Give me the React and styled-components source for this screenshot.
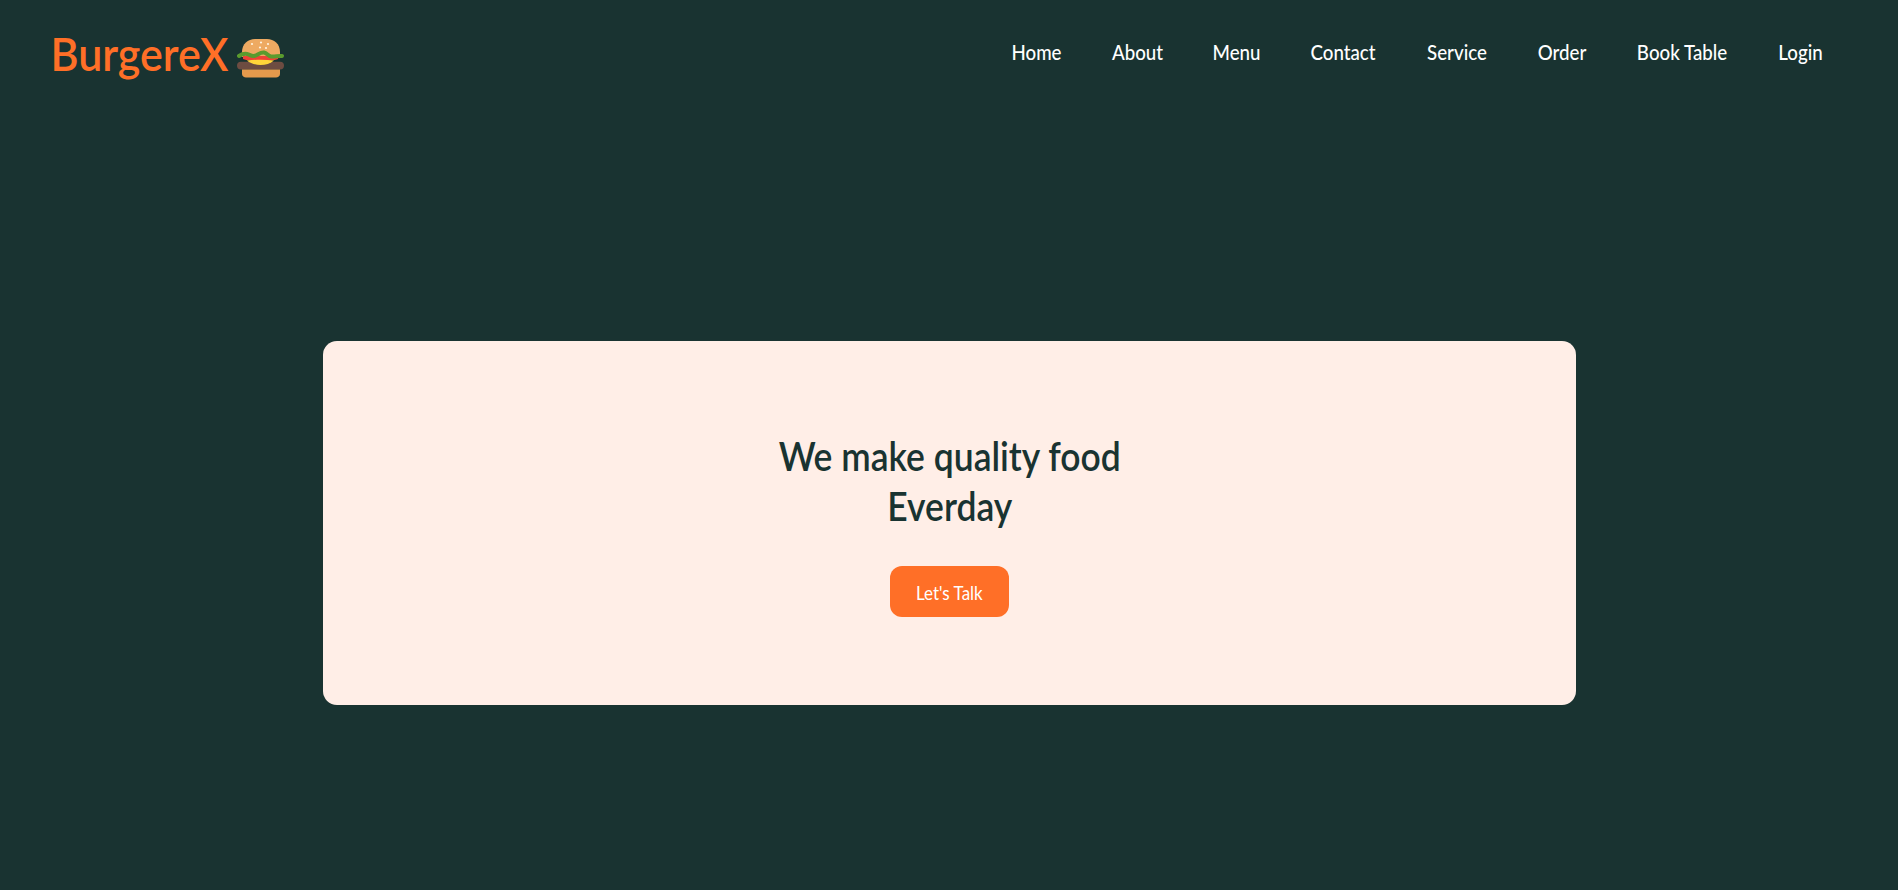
import React from 'react'
import styled, { createGlobalStyle } from 'styled-components'

// widths keep every link on the same spot as the design
const NAV_LINKS = [
    { label: 'Home', width: 51 },
    { label: 'About', width: 51 },
    { label: 'Menu', width: 47 },
    { label: 'Contact', width: 66 },
    { label: 'Service', width: 62 },
    { label: 'Order', width: 48 },
    { label: 'Book Table', width: 92 },
    { label: 'Login', width: 45 },
]

const GlobalStyle = createGlobalStyle`
    * {
        box-sizing: border-box;
    }
    body {
        margin: 0;
        background-color: #193331;
        font-family: "Lato", "Noto Sans", sans-serif;
    }
`

function BurgerIcon() {
    return (
        <Burger viewBox="0 0 47 39" aria-hidden="true">
            <path d="M5 13C5 5 11 0 18 0H30C37 0 43 5 43 13V18H5Z" fill="#eeaa62" />
            <g fill="#fff3df">
                <circle cx="15" cy="5" r="1.1" />
                <circle cx="24" cy="3.5" r="1.1" />
                <circle cx="31" cy="5" r="1.1" />
                <circle cx="23" cy="8.5" r="1.1" />
                <circle cx="29" cy="9" r="1.1" />
            </g>
            <path d="M6 17H41V20C34 23 13 23 6 20Z" fill="#ef4336" />
            <path d="M2 17C5 15 7 14.5 10 15C13 15.5 14 17.5 17 17C21 16 23 13 27 13.5C30 14 31 17 34 17.5C38 18 41 16.5 45 17" fill="none" stroke="#5a9b2e" strokeWidth="4" strokeLinecap="round" />
            <rect x="0" y="22.7" width="47" height="7.8" rx="3.9" fill="#6d4c41" />
            <path d="M10 21.5C20 20.5 28 20.5 37 21.5C30 27.5 17 27.5 10 21.5Z" fill="#ffd639" />
            <path d="M5 30.5H43V35C43 37 41 38.5 39 38.5H9C7 38.5 5 37 5 35Z" fill="#e59a4c" />
        </Burger>
    )
}

function App() {
    return (
        <Page>
            <GlobalStyle />
            <Header>
                <Logo>
                    <LogoText>BurgereX</LogoText>
                    <BurgerIcon />
                </Logo>
                <Nav>
                    {NAV_LINKS.map((link) => (
                        <NavLink key={link.label} href="#" $width={link.width}>{link.label}</NavLink>
                    ))}
                </Nav>
            </Header>
            <Hero>
                <Card>
                    <Title>We make quality food<br />Everday</Title>
                    <TalkButton><ButtonLabel>Let's Talk</ButtonLabel></TalkButton>
                </Card>
            </Hero>
        </Page>
    )
}

export default App

const Page = styled.div`
    min-height: 100vh;
    background-color: #193331;
`

const Header = styled.header`
    height: 104px;
    display: flex;
    justify-content: space-between;
    align-items: center;
    padding: 0 75px 0 52px;
`

const Logo = styled.a`
    display: flex;
    align-items: center;
    gap: 10px;
`

// the design font is narrow, so the text is squeezed sideways to the same width
const LogoText = styled.span`
    width: 175px;
    margin-top: 3px;
    display: flex;
    justify-content: center;
    color: #ff6f27;
    font-size: 46px;
    font-weight: 600;
    line-height: 56px;
    transform: scaleX(0.935);
`

const Burger = styled.svg`
    width: 47px;
    height: 39px;
    margin-top: 12px;
`

const Nav = styled.nav`
    display: flex;
    gap: 50px;
    margin-bottom: 2px;
`

const NavLink = styled.a`
    width: ${props => props.$width}px;
    display: flex;
    justify-content: center;
    color: #ffffff;
    font-size: 22px;
    font-weight: 500;
    white-space: nowrap;
    text-decoration: none;
    transform: scaleX(0.85);
`

const Hero = styled.section`
    display: flex;
    justify-content: center;
    padding-top: 237px;
`

const Card = styled.div`
    width: 1253px;
    height: 364px;
    margin-left: 1px;
    display: flex;
    flex-direction: column;
    align-items: center;
    padding-top: 90px;
    background-color: #ffeee7;
    border-radius: 14px;
`

const Title = styled.h1`
    margin: 0 0 35px;
    color: #193331;
    font-size: 41px;
    font-weight: 600;
    line-height: 50px;
    text-align: center;
    transform: scaleX(0.865);
`

const TalkButton = styled.button`
    width: 119px;
    height: 51px;
    border: none;
    border-radius: 12px;
    background-color: #ff6f27;
    color: #ffffff;
    font-family: inherit;
    font-size: 20px;
`

const ButtonLabel = styled.span`
    display: inline-block;
    transform: scaleX(0.85);
`
